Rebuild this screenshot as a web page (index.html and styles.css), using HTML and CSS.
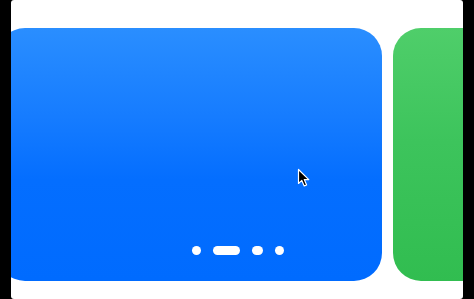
FILE: index.html
```html
<!DOCTYPE html>
<html>
<head>
<meta charset="utf-8">
<link rel="stylesheet" href="styles.css">
</head>
<body>
<div class="screen">
  <div class="track">
    <div class="card card-blue">
      <div class="pager">
        <span class="dot"></span>
        <span class="dot dot-active"></span>
        <span class="dot dot-wide"></span>
        <span class="dot"></span>
      </div>
    </div>
    <div class="card card-green"></div>
  </div>
  <svg class="cursor" width="14" height="20" viewBox="0 0 14 20">
    <path d="M1.5 1.5 L1.5 15.5 L4.8 12.4 L7.2 18 L9.6 17 L7.3 11.6 L11.8 11.6 Z" fill="#000" stroke="#fff" stroke-width="1.2" stroke-linejoin="round"/>
  </svg>
</div>
</body>
</html>
```

FILE: styles.css
```css
html, body {
  margin: 0;
  padding: 0;
  background: #000;
  height: 100%;
}
body {
  display: flex;
  padding: 0 11px 0 11px;
  box-sizing: border-box;
  width: 474px;
  height: 299px;
}
.screen {
  position: relative;
  flex: 1;
  background: #fff;
  overflow: hidden;
  border-radius: 3px;
}
.track {
  display: flex;
  gap: 11px;
  margin-left: -14px;
  padding-top: 28px;
}
.card {
  flex: 0 0 385px;
  height: 253px;
  border-radius: 28px;
  display: flex;
  flex-direction: column;
  justify-content: flex-end;
  align-items: center;
}
.card-blue {
  background: linear-gradient(180deg, #2a8eff 0%, #167cff 35%, #046eff 60%, #006bff 100%);
}
.card-green {
  background: linear-gradient(180deg, #4fce6a 0%, #3dc45c 45%, #31bd50 100%);
}
.pager {
  display: flex;
  align-items: center;
  gap: 12px;
  margin-bottom: 26px;
  margin-left: 97px;
}
.dot {
  width: 9px;
  height: 9px;
  border-radius: 5px;
  background: #fff;
}
.dot-active {
  width: 27px;
}
.dot-wide {
  width: 11px;
}
.cursor {
  position: absolute;
  left: 286px;
  top: 168px;
}
```
